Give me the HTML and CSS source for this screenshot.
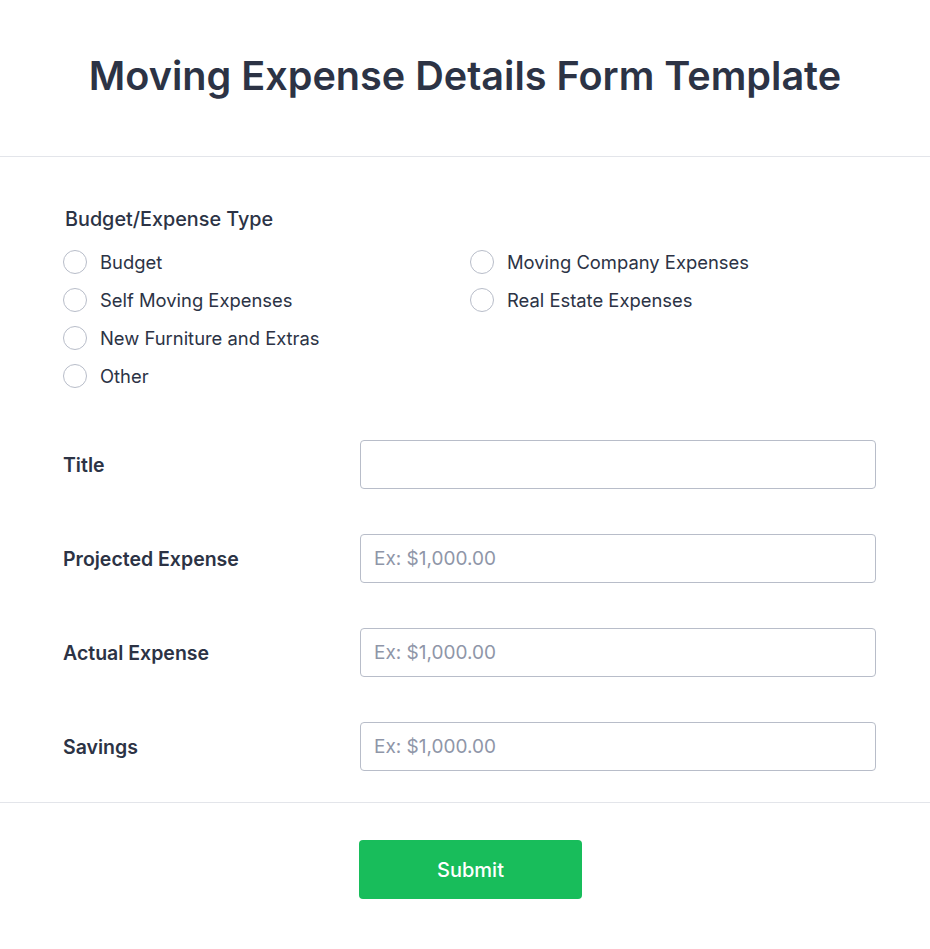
FILE: index.html
```html
<!DOCTYPE html>
<html lang="en">
<head>
    <meta charset="UTF-8">
    <meta name="viewport" content="width=device-width, initial-scale=1.0">
    <title>Moving Expense Details Form Template</title>
    <link rel="stylesheet" href="styles.css">
</head>
<body>
    <div class="form">
        <!-- Cabeçalho -->
        <div class="form-header">
            <h1>Moving Expense Details Form Template</h1>
        </div>

        <div class="form-body">
            <!-- Tipo -->
            <div class="radio-group">
                <div class="group-label">Budget/Expense Type</div>
                <div class="radio-grid">
                    <label class="radio"><span class="circle"></span>Budget</label>
                    <label class="radio"><span class="circle"></span>Moving Company Expenses</label>
                    <label class="radio"><span class="circle"></span>Self Moving Expenses</label>
                    <label class="radio"><span class="circle"></span>Real Estate Expenses</label>
                    <label class="radio"><span class="circle"></span>New Furniture and Extras</label>
                    <span></span>
                    <label class="radio"><span class="circle"></span>Other</label>
                </div>
            </div>

            <!-- Campos -->
            <div class="field">
                <label>Title</label>
                <input type="text">
            </div>
            <div class="field">
                <label>Projected Expense</label>
                <input type="text" placeholder="Ex: $1,000.00">
            </div>
            <div class="field">
                <label>Actual Expense</label>
                <input type="text" placeholder="Ex: $1,000.00">
            </div>
            <div class="field">
                <label>Savings</label>
                <input type="text" placeholder="Ex: $1,000.00">
            </div>
        </div>

        <div class="form-footer">
            <button type="button">Submit</button>
        </div>
    </div>
</body>
</html>
```

FILE: styles.css
```css
* {
    box-sizing: border-box;
    margin: 0;
    padding: 0;
    font-family: 'Inter', 'Noto Sans', sans-serif;
}

body {
    background: #fff;
    color: #2c3345;
}

.form-header {
    height: 157px;
    border-bottom: 1px solid #e3e5ea;
    display: flex;
    justify-content: center;
    align-items: center;
    padding-bottom: 4px;
}

h1 {
    font-size: 39.6px;
    font-weight: 600;
    color: #2c3345;
}

.form-body {
    padding: 50px 54px 31px 63px;
    border-bottom: 1px solid #e3e5ea;
}

/* Opções */
.group-label {
    font-size: 19.8px;
    font-weight: 500;
    margin-left: 2px;
    margin-bottom: 19px;
}

.radio-grid {
    display: grid;
    grid-template-columns: 407px 1fr;
    row-gap: 14px;
}

.radio {
    display: flex;
    align-items: center;
    height: 24px;
    font-size: 18.4px;
    gap: 13px;
    color: #2c3345;
}

.circle {
    width: 24px;
    height: 24px;
    border: 1px solid #b8bdc9;
    border-radius: 50%;
    flex-shrink: 0;
}

/* Campos */
.field {
    display: grid;
    grid-template-columns: 297px 1fr;
    align-items: center;
    margin-top: 52px;
}

.field + .field {
    margin-top: 45px;
}

.field label {
    font-size: 19.5px;
    font-weight: 600;
}

.field input {
    height: 49px;
    border: 1px solid #b8bdc9;
    border-radius: 4px;
    padding: 0 13px;
    font-size: 19px;
    color: #2c3345;
}

.field input::placeholder {
    color: #8f96a8;
}

.form-footer {
    display: flex;
    justify-content: center;
    padding-top: 37px;
}

button {
    width: 223px;
    height: 59px;
    margin-left: 11px;
    background: #18bd5b;
    color: #fff;
    border: none;
    border-radius: 4px;
    font-size: 20px;
    font-weight: 500;
    cursor: pointer;
}
```
